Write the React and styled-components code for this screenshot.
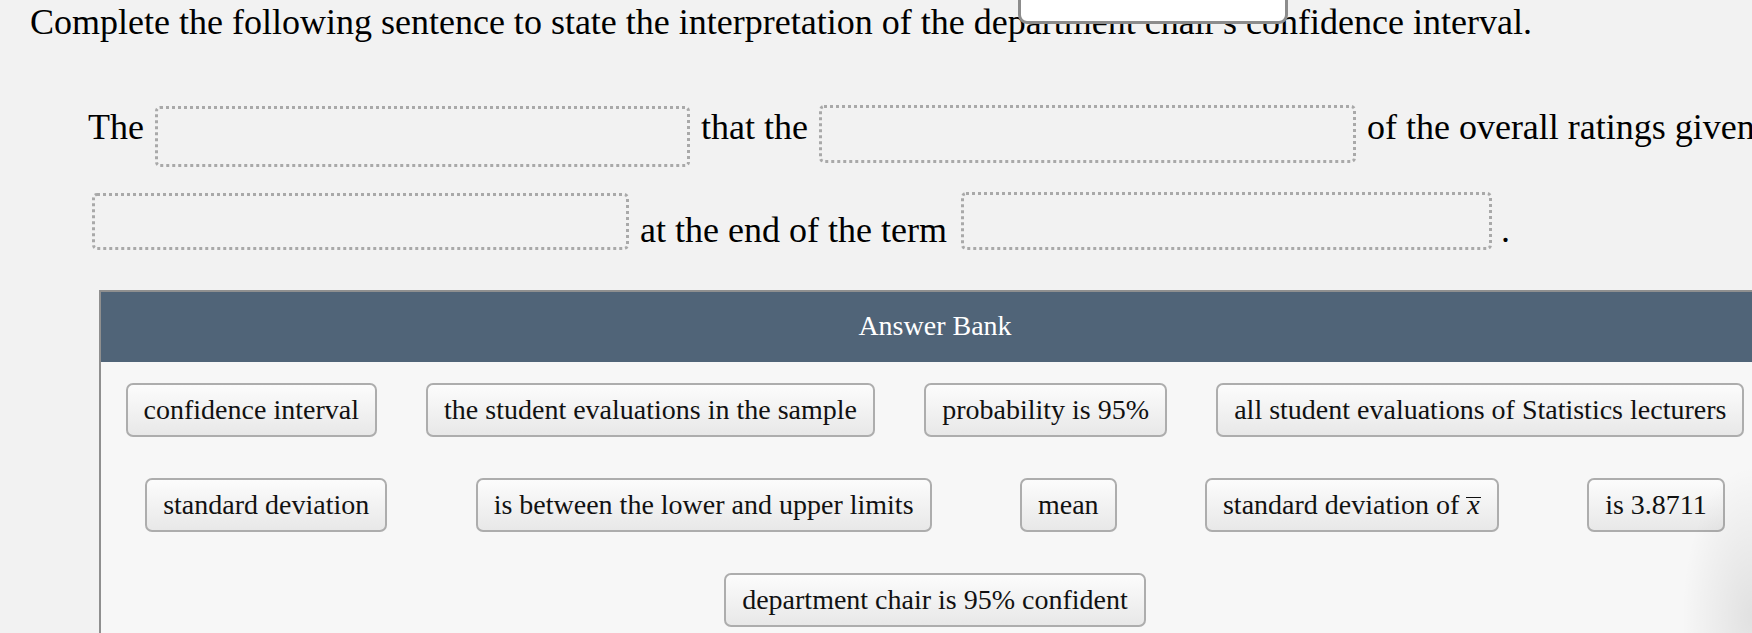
import React from "react";
import styled, { createGlobalStyle } from "styled-components";

const GlobalStyle = createGlobalStyle`
  html, body {
    margin: 0;
    padding: 0;
    overflow: hidden;
    background: #f2f2f2;
  }
  body {
    font-family: "Liberation Serif", "Times New Roman", serif;
    color: #000;
  }
`

const Page = styled.div`
  position: relative;
  width: 1752px;
  height: 633px;
  overflow: hidden;
  padding-top: 2px;
  box-sizing: border-box;
`

const Title = styled.p`
  margin: 0;
  padding-left: 30px;
  font-size: 36px;
  line-height: 40px;
  white-space: nowrap;
`

const Popup = styled.div`
  position: absolute;
  left: 1018px;
  top: -4px;
  width: 264px;
  height: 22px;
  background: #fff;
  border: 3px solid #8c8c8c;
  border-radius: 0 0 9px 9px;
`

const SentenceRow = styled.div`
  display: flex;
  align-items: ${(p) => (p.$bottom ? "flex-end" : "flex-start")};
  gap: 11px;
  margin-top: ${(p) => p.$top}px;
  padding-left: ${(p) => p.$left}px;
  white-space: nowrap;
  font-size: 36px;
`

const Words = styled.span`
  line-height: ${(p) => p.$lh}px;
  flex-shrink: 0;
`

const Drop = styled.div`
  flex-shrink: 0;
  box-sizing: border-box;
  width: ${(p) => p.$w}px;
  height: ${(p) => p.$h}px;
  margin-top: ${(p) => p.$mt || 0}px;
  border: 3px dotted #a9a9a9;
  border-radius: 5px;
`

const Bank = styled.section`
  margin-top: 40px;
  margin-left: 99px;
  width: 1668px;
  border: 2px solid #8f8f8f;
  border-bottom: none;
  background: #f7f7f7;
`

const BankHeader = styled.div`
  height: 70px;
  line-height: 68px;
  background: #506478;
  color: #fff;
  text-align: center;
  font-size: 28px;
`

const BankBody = styled.div`
  display: flex;
  flex-direction: column;
  gap: 41px;
  padding-top: 21px;
  padding-bottom: 30px;
`

const ChipRow = styled.div`
  display: flex;
  justify-content: space-around;
`

const Chip = styled.div`
  box-sizing: border-box;
  height: 54px;
  line-height: 50px;
  padding: 0 16px;
  border: 2px solid #adadad;
  border-radius: 7px;
  background: linear-gradient(#fcfcfc, #e8e8e8);
  font-size: 28px;
  color: #111;
  white-space: nowrap;
`

const Xbar = styled.i`
  display: inline-block;
  line-height: 14px;
  border-top: 1px solid #111;
  padding: 0 1px;
`

const CornerShade = styled.div`
  position: absolute;
  right: 0;
  bottom: 0;
  width: 110px;
  height: 170px;
  background: radial-gradient(ellipse 70px 150px at 100% 90%, rgba(0, 0, 0, 0.09), rgba(0, 0, 0, 0));
  pointer-events: none;
`

const rows = [
  ["confidence interval", "the student evaluations in the sample", "probability is 95%", "all student evaluations of Statistics lecturers"],
  ["standard deviation", "is between the lower and upper limits", "mean", "xbar", "is 3.8711"],
  ["department chair is 95% confident"],
];

const App = () => {
  return (
    <Page>
      <GlobalStyle />
      <Title>Complete the following sentence to state the interpretation of the department chair's confidence interval.</Title>
      <Popup />

      <SentenceRow $top={63} $left={88}>
        <Words $lh={44}>The</Words>
        <Drop $w={535} $h={61} $mt={1} />
        <Words $lh={44}>that the</Words>
        <Drop $w={537} $h={58} />
        <Words $lh={44}>of the overall ratings given</Words>
      </SentenceRow>

      <SentenceRow $top={25} $left={92} $bottom>
        <Drop $w={537} $h={57} />
        <Words $lh={40}>at the end of the term</Words>
        <Drop $w={531} $h={58} style={{ marginLeft: 3 }} />
        <Words $lh={40} style={{ marginLeft: -2 }}>.</Words>
      </SentenceRow>

      <Bank>
        <BankHeader>Answer Bank</BankHeader>
        <BankBody>
          {rows.map((row, i) => (
            <ChipRow key={i}>
              {row.map((t) =>
                t === "xbar" ? (
                  <Chip key={t}>standard deviation of <Xbar>x</Xbar></Chip>
                ) : (
                  <Chip key={t}>{t}</Chip>
                )
              )}
            </ChipRow>
          ))}
        </BankBody>
      </Bank>

      <CornerShade />
    </Page>
  );
};

export default App;
